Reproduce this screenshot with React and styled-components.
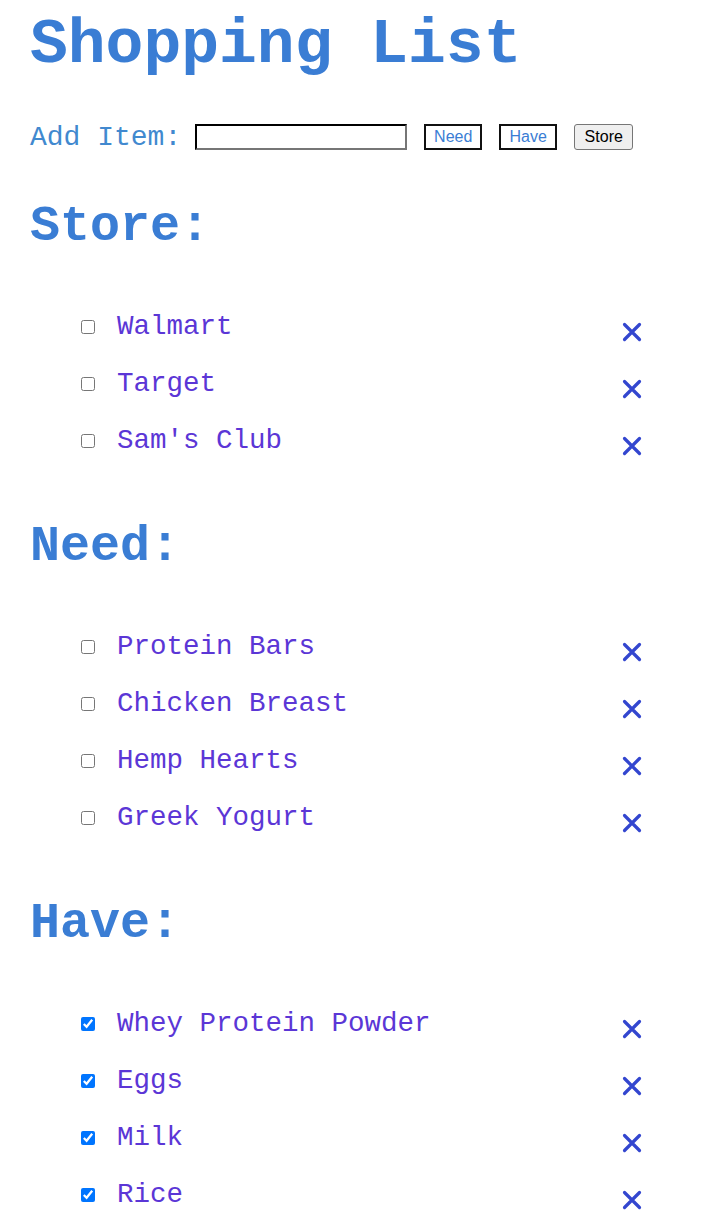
import styled, { createGlobalStyle } from "styled-components";

const GlobalStyle = createGlobalStyle`
body {
  margin: 0;
  background: #ffffff;
  font-family: "Courier New", "Nimbus Mono PS", FreeMono, "Liberation Mono", monospace;
}
`

const Page = styled.main`
padding: 11px 30px 40px 30px;
`

const Title = styled.h1`
margin: 0;
font-size: 63px;
line-height: 70px;
font-weight: 700;
color: #3a7dd4;
`

const AddRow = styled.div`
margin-top: 40px;
height: 32px;
display: flex;
align-items: center;
`

const AddLabel = styled.label`
font-size: 28px;
color: #4189cf;
margin-right: 14px;
`

const ItemInput = styled.input`
box-sizing: border-box;
width: 212px;
height: 26px;
border: 2px inset #767676;
border-top-color: #222;
border-left-color: #222;
margin: 0 17px 0 0;
padding: 0 4px;
`

const TypeButton = styled.button`
box-sizing: border-box;
height: 26px;
width: ${p => p.$w || 58}px;
margin-right: 17px;
padding: 0;
font-family: "Liberation Sans", Arial, sans-serif;
font-size: 16px;
color: ${p => (p.$plain ? "#000" : "#3a7dd4")};
background: ${p => (p.$plain ? "#efefef" : "#fff")};
border: ${p => (p.$plain ? "1px solid #767676" : "2px solid #111")};
border-radius: ${p => (p.$plain ? "3px" : "0")};
`

const Heading = styled.h2`
margin: ${p => p.$first ? "45px" : "49px"} 0 0 0;
font-size: 50px;
line-height: 57px;
font-weight: 700;
color: #3a7dd4;
`

const List = styled.ul`
list-style: none;
margin: 43px 0 0 51px;
padding: 0;
width: 561px;
`

const Row = styled.li`
height: 57px;
display: grid;
grid-template-columns: 14px 1fr 20px;
align-items: center;
`

const Check = styled.input`
margin: 0;
width: 14px;
height: 14px;
`

const ItemName = styled.span`
margin-left: 22px;
font-size: 27.5px;
color: #5b36d6;
`

const RemoveButton = styled.button`
border: none;
background: none;
padding: 0;
margin-top: 10px;
width: 20px;
height: 20px;
display: flex;
`

function CrossIcon() {
    return (
        <svg width="20" height="20" viewBox="0 0 20 20">
            <path d="M2.5 2.5 L17.5 17.5 M17.5 2.5 L2.5 17.5" stroke="#3346cf" strokeWidth="3.2" strokeLinecap="round" />
        </svg>
    )
}

const sections = [
    { title: "Store:", done: false, items: ["Walmart", "Target", "Sam's Club"] },
    { title: "Need:", done: false, items: ["Protein Bars", "Chicken Breast", "Hemp Hearts", "Greek Yogurt"] },
    { title: "Have:", done: true, items: ["Whey Protein Powder", "Eggs", "Milk", "Rice"] },
]

function App() {
    return (
        <Page>
            <GlobalStyle />
            <Title>Shopping List</Title>
            <AddRow>
                <AddLabel>Add Item:</AddLabel>
                <ItemInput type="text" />
                <TypeButton>Need</TypeButton>
                <TypeButton>Have</TypeButton>
                <TypeButton $plain $w={59}>Store</TypeButton>
            </AddRow>
            {sections.map((s, i) => (
                <section key={s.title}>
                    <Heading $first={i === 0}>{s.title}</Heading>
                    <List>
                        {s.items.map(item => (
                            <Row key={item}>
                                <Check type="checkbox" defaultChecked={s.done} />
                                <ItemName>{item}</ItemName>
                                <RemoveButton aria-label="remove"><CrossIcon /></RemoveButton>
                            </Row>
                        ))}
                    </List>
                </section>
            ))}
        </Page>
    )
}

export default App;
